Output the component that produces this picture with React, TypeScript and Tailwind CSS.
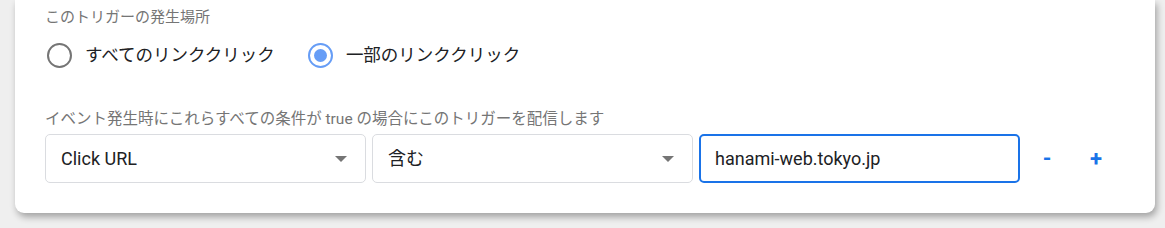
const font = { fontFamily: 'Roboto, "Noto Sans CJK JP", sans-serif' }

function Caret() {
  return (
    <svg width="12" height="6" viewBox="0 0 12 6" className="shrink-0">
      <path d="M0 0h12L6 6z" fill="#757575" />
    </svg>
  )
}

function Select({ value }: { value: string }) {
  return (
    <div className="flex h-[49px] w-[321px] items-center justify-between rounded-[5px] border border-[#dadce0] bg-white pl-[15px] pr-[18px]">
      <span className="text-[18px] text-[#202124]">{value}</span>
      <Caret />
    </div>
  )
}

function Radio({ checked, label }: { checked?: boolean; label: string }) {
  return (
    <label className="flex items-center gap-[13px]">
      {checked ? (
        <span className="flex h-[25px] w-[25px] items-center justify-center rounded-full border-[2.5px] border-[#669df6]">
          <span className="h-[13px] w-[13px] rounded-full bg-[#669df6]" />
        </span>
      ) : (
        <span className="h-[25px] w-[25px] rounded-full border-[2.5px] border-[#757575]" />
      )}
      <span className="text-[17.5px] text-[#202124]">{label}</span>
    </label>
  )
}

export default function App() {
  return (
    <div className="h-[228px] w-[1165px] overflow-hidden bg-[#efefef] pl-[15px] pr-[10px]" style={font}>
      <div className="rounded-b-[9px] bg-white pb-[30px] pl-[30px] pt-[6px] shadow-[2px_4px_7px_rgba(0,0,0,0.32)]">
        <div className="text-[15px] leading-[22px] text-[#757575]">このトリガーの発生場所</div>
        <div className="mt-[14px] flex h-[26px] items-center gap-[33px] pl-[2px]">
          <Radio label="すべてのリンククリック" />
          <Radio checked label="一部のリンククリック" />
        </div>
        <div className="mt-[40px] text-[15.5px] leading-[22px] text-[#757575]">
          イベント発生時にこれらすべての条件が true の場合にこのトリガーを配信します
        </div>
        <div className="mt-[4px] flex items-center gap-[6px]">
          <Select value="Click URL" />
          <Select value="含む" />
          <div className="flex h-[49px] w-[321px] items-center rounded-[5px] border-2 border-[#1a73e8] bg-white pl-[14px]">
            <span className="text-[18px] text-[#202124]">hanami-web.tokyo.jp</span>
          </div>
          <div className="flex items-center">
            <span className="ml-[14px] w-[14px] text-center text-[22px] font-bold leading-none text-[#1a73e8]">-</span>
            <span className="ml-[35px] w-[14px] text-center text-[22px] font-bold leading-none text-[#1a73e8]">+</span>
          </div>
        </div>
      </div>
    </div>
  )
}
